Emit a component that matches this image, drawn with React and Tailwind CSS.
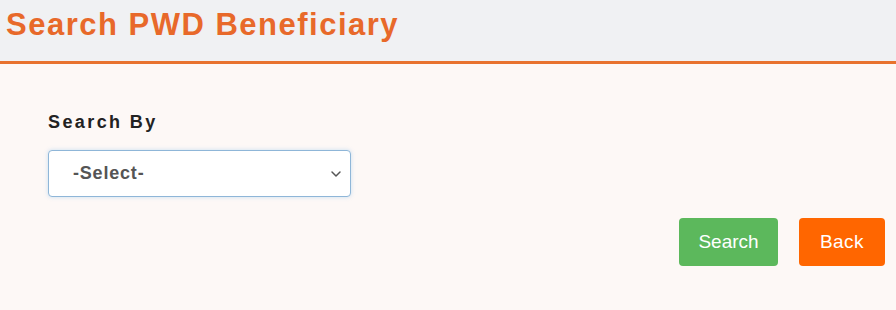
import { ChevronDown } from "lucide-react";

export default function App() {
  return (
    <div className="h-[310px] w-[896px] overflow-hidden bg-[#fdf8f6] font-['Liberation_Sans',Arial,sans-serif]">
      <div className="h-[64px] border-b-[3px] border-[#e8722e] bg-[#f0f1f3] px-[6px] pt-[7px]">
        <h1 className="text-[31px] font-bold leading-[36px] tracking-[1.5px] text-[#e8692a]">
          Search PWD Beneficiary
        </h1>
      </div>

      <div className="px-[48px] pt-[48px]">
        <label className="block text-[18px] font-bold leading-[20px] tracking-[2.4px] text-[#222]">
          Search By
        </label>
        <div className="relative mt-[18px] h-[47px] w-[303px] rounded-[4px] border border-[#8fb6d8] bg-white shadow-[0_0_4px_rgba(102,175,233,0.35)]">
          <div className="flex h-full items-center justify-between pl-[24px] pr-[6px]">
            <span className="text-[18px] font-bold tracking-[0.8px] text-[#555]">-Select-</span>
            <ChevronDown className="h-[16px] w-[16px] text-[#555]" strokeWidth={2.2} />
          </div>
        </div>
      </div>

      <div className="flex justify-end gap-[21px] pr-[11px] pt-[21px]">
        <button className="h-[48px] w-[99px] rounded-[4px] bg-[#5cb85c] text-[19px] text-white">
          Search
        </button>
        <button className="h-[48px] w-[86px] rounded-[4px] bg-[#ff6600] text-[19px] tracking-[0.5px] text-white">
          Back
        </button>
      </div>
    </div>
  );
}
